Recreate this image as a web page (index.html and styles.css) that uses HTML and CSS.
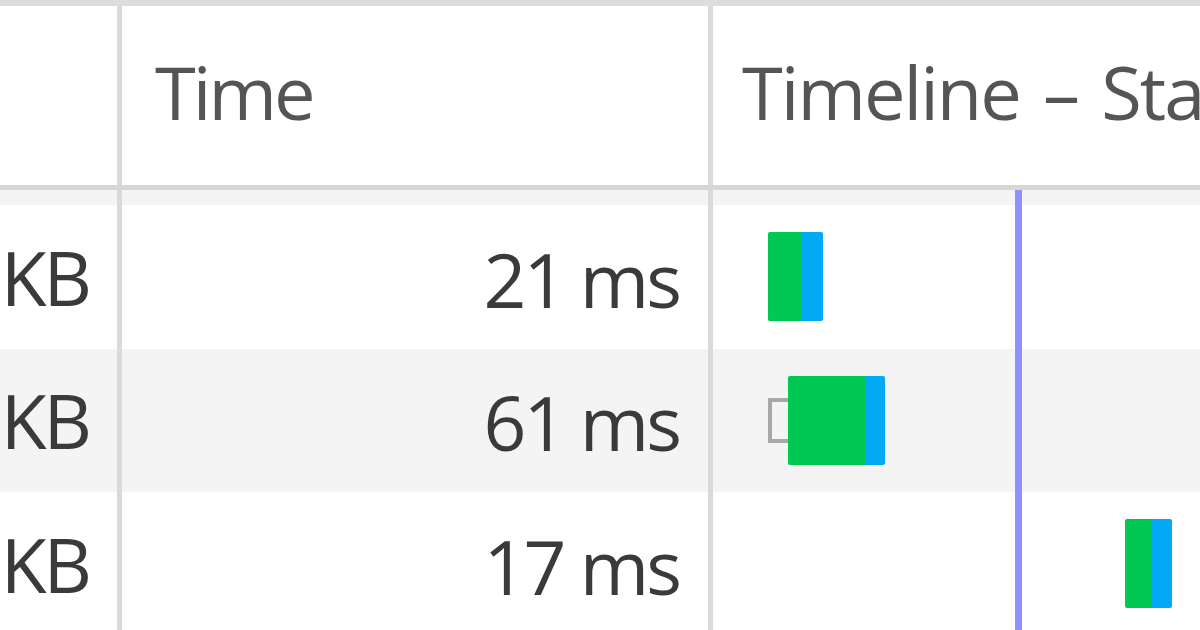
FILE: index.html
```html
<!DOCTYPE html>
<html lang="en">
<head>
  <meta charset="UTF-8" />
  <title>Network</title>
  <link rel="stylesheet" href="styles.css">
</head>
<body>
  <div class="net-table">
    <div class="head-row">
      <div class="cell col-size"></div>
      <div class="cell col-time">Time</div>
      <div class="cell col-timeline">Timeline – Start Time</div>
    </div>

    <div class="body-rows">
      <div class="row row-stripe row-partial">
        <div class="cell col-size"></div>
        <div class="cell col-time"></div>
        <div class="cell col-timeline"></div>
      </div>

      <div class="row">
        <div class="cell col-size num">KB</div>
        <div class="cell col-time num">21 ms</div>
        <div class="cell col-timeline">
          <div class="bar" style="margin-left:55px">
            <span class="seg seg-recv" style="width:34px"></span><span class="seg seg-load" style="width:21px"></span>
          </div>
        </div>
      </div>

      <div class="row row-stripe">
        <div class="cell col-size num">KB</div>
        <div class="cell col-time num">61 ms</div>
        <div class="cell col-timeline">
          <div class="bar" style="margin-left:55px">
            <span class="seg seg-wait" style="width:20px"></span><span class="seg seg-recv" style="width:77px"></span><span class="seg seg-load" style="width:20px"></span>
          </div>
        </div>
      </div>

      <div class="row">
        <div class="cell col-size num">KB</div>
        <div class="cell col-time num">17 ms</div>
        <div class="cell col-timeline">
          <div class="bar" style="margin-left:412px">
            <span class="seg seg-recv" style="width:27px"></span><span class="seg seg-load" style="width:20px"></span>
          </div>
        </div>
      </div>

      <div class="dom-line"></div>
    </div>
  </div>
</body>
</html>
```

FILE: styles.css
```css
* {
  box-sizing: border-box;
}

body {
  margin: 0;
  padding: 0;
  width: 1200px;
  height: 630px;
  overflow: hidden;
  background: #ffffff;
  font-family: "Open Sans", "Liberation Sans", sans-serif;
  color: #333;
}

.net-table {
  border-top: 6px solid #dddddd;
}

.head-row,
.row {
  display: grid;
  grid-template-columns: 122px 591px 1fr;
}

.head-row {
  height: 184px;
  border-bottom: 5px solid #d6d6d6;
  font-size: 74px;
  letter-spacing: -3px;
  color: #555;
}

.cell {
  display: flex;
  align-items: center;
  white-space: nowrap;
  overflow: hidden;
}

.col-size,
.col-time {
  border-right: 5px solid #dadada;
}

.head-row .col-time {
  padding-left: 33px;
  padding-bottom: 8px;
}

.head-row .col-timeline {
  padding-left: 29px;
  padding-bottom: 8px;
  letter-spacing: -2px;
  word-spacing: 6px;
}

.body-rows {
  position: relative;
}

.row {
  height: 143.5px;
  background: #ffffff;
}

.row-stripe {
  background: #f4f4f4;
}

.row-partial {
  height: 15px;
}

.num {
  justify-content: flex-end;
  font-size: 75px;
  letter-spacing: -3px;
  color: #3a3a3a;
}

.col-size.num {
  padding-right: 28px;
}

.col-time.num {
  padding-right: 29px;
  padding-top: 4px;
}

.bar {
  display: flex;
  align-items: center;
}

.seg {
  display: block;
  height: 89px;
}

.seg-recv {
  background: #00c853;
  border-radius: 2px 0 0 2px;
}

.seg-load {
  background: #03a9f4;
  border-radius: 0 2px 2px 0;
}

.seg-wait {
  height: 45px;
  border: 4px solid #a8a8a8;
  border-right: none;
  background: #f4f4f4;
}

.dom-line {
  position: absolute;
  top: 0;
  bottom: 0;
  left: 1015px;
  width: 7px;
  background: #9090ff;
}
```
